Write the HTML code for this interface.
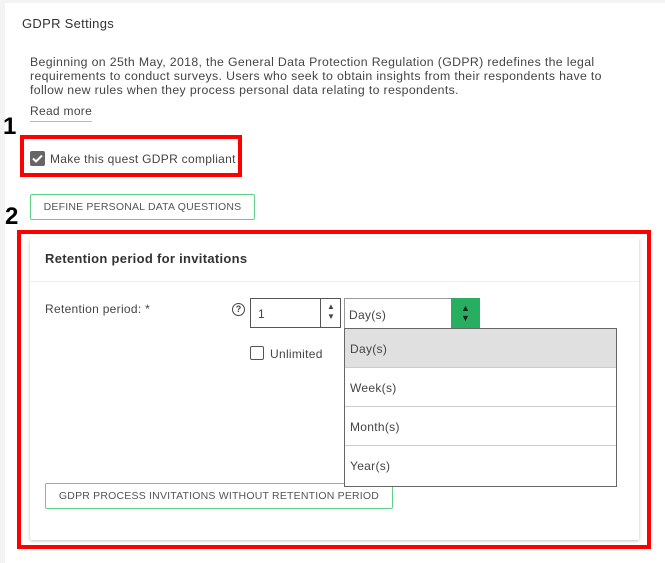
<!DOCTYPE html>
<html><head><style>
body{margin:0;width:665px;height:558px;background:#f3f3f3;font-family:"Liberation Sans",sans-serif;color:#444;position:relative;overflow:hidden;letter-spacing:.3px}
.a{position:absolute}
.card{left:5px;top:3px;width:660px;height:560px;background:#fff}
.btn{border:1px solid #5fcf8a;border-radius:2px;font-size:10.5px;color:#555;letter-spacing:.2px;display:flex;align-items:center;justify-content:center;box-sizing:border-box}
.red{border:4px solid #ff0000;box-sizing:border-box}
.row{position:absolute;left:0;width:100%;height:39px;border-bottom:1px solid #ccc;box-sizing:border-box;font-size:12px;padding:13px 0 0 5px}
</style></head><body>
<div class="a card"></div>
<div class="a" style="left:22px;top:16px;font-size:13px;color:#333">GDPR Settings</div>
<div class="a" style="left:30px;top:55px;white-space:nowrap;font-size:12.3px;line-height:14px;color:#444;letter-spacing:.35px">Beginning on 25th May, 2018, the General Data Protection Regulation (GDPR) redefines the legal<br>requirements to conduct surveys. Users who seek to obtain insights from their respondents have to<br>follow new rules when they process personal data relating to respondents.</div>
<div class="a" style="left:30px;top:104px;font-size:12px;border-bottom:1px solid #bbb;padding-bottom:3px">Read more</div>
<div class="a" style="left:3px;top:113px;font-size:24px;font-weight:bold;color:#000;letter-spacing:0">1</div>
<div class="a red" style="left:20px;top:135px;width:222px;height:42px"></div>
<div class="a" style="left:30px;top:151px;width:15px;height:15px;background:#666;border-radius:2px"><svg width="15" height="15"><path d="M3 7.5l3 3 6-6" stroke="#fff" stroke-width="2" fill="none"/></svg></div>
<div class="a" style="left:50px;top:152px;font-size:12px;color:#444">Make this quest GDPR compliant</div>
<div class="a btn" style="left:30px;top:194px;width:225px;height:26px">DEFINE PERSONAL DATA QUESTIONS</div>
<div class="a" style="left:5px;top:203px;font-size:24px;font-weight:bold;color:#000;letter-spacing:0">2</div>
<div class="a" style="left:30px;top:238px;width:609px;height:302px;background:#fff;box-shadow:0 1px 3px rgba(0,0,0,.25);border-radius:2px"></div>
<div class="a" style="left:30px;top:281px;width:609px;height:1px;background:#eee"></div>
<div class="a" style="left:45px;top:251px;font-size:13px;font-weight:bold;color:#333">Retention period for invitations</div>
<div class="a" style="left:45px;top:302px;font-size:12px">Retention period: *</div>
<div class="a" style="left:232px;top:303px;width:11px;height:11px;border:1.3px solid #444;border-radius:50%;font-size:9px;text-align:center;line-height:11px;font-weight:bold;letter-spacing:0">?</div>
<div class="a" style="left:250px;top:298px;width:91px;height:30px;border:1px solid #555;box-sizing:border-box"><div class="a" style="left:69px;top:0;width:1px;height:28px;background:#555"></div><div class="a" style="left:7px;top:8px;font-size:12px">1</div><div class="a" style="left:76px;top:3px;font-size:8px;line-height:10px;color:#444">▲<br>▼</div></div>
<div class="a" style="left:344px;top:298px;width:136px;height:31px;border:1px solid #999;box-sizing:border-box;border-right:none"><div class="a" style="left:4px;top:9px;font-size:12px">Day(s)</div></div>
<div class="a" style="left:451px;top:298px;width:29px;height:31px;background:#27ae60;color:#222;font-size:9px;line-height:10px;text-align:center;box-sizing:border-box;padding-top:5px;letter-spacing:0">▲<br>▼</div>
<div class="a" style="left:250px;top:346px;width:12px;height:12px;border:1.5px solid #555;border-radius:2px"></div>
<div class="a" style="left:270px;top:347px;font-size:12px">Unlimited</div>
<div class="a btn" style="left:45px;top:483px;width:348px;height:26px">GDPR PROCESS INVITATIONS WITHOUT RETENTION PERIOD</div>
<div class="a" style="left:344px;top:328px;width:273px;height:159px;border:1px solid #666;background:#fff;box-sizing:border-box">
<div class="row" style="top:0;background:#e0e0e0">Day(s)</div>
<div class="row" style="top:39px">Week(s)</div>
<div class="row" style="top:78px">Month(s)</div>
<div class="row" style="top:117px;border:none">Year(s)</div>
</div>
<div class="a red" style="left:17px;top:230px;width:634px;height:319px"></div>
</body></html>
